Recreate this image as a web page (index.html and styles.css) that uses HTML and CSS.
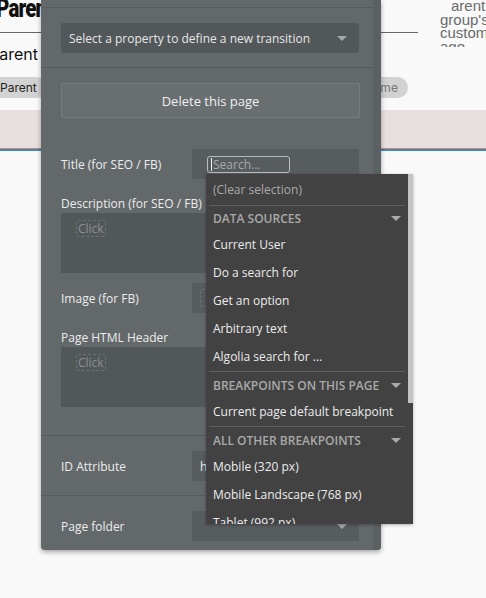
FILE: index.html
```html
<!DOCTYPE html>
<html>
<head>
<meta charset="utf-8">
<link rel="stylesheet" href="styles.css">
</head>
<body>
<div class="canvas">
  <div class="cv-heading">Parent</div>
  <div class="cv-rule"></div>
  <div class="cv-sub">Parent</div>
  <div class="cv-pill cv-pill-left">Parent</div>
  <div class="cv-pill cv-pill-right">Rename</div>
  <div class="cv-note">
    <div class="cv-note-line cv-indent">arent</div>
    <div class="cv-note-line">group's</div>
    <div class="cv-note-line">custom</div>
    <div class="cv-note-line">ago</div>
  </div>
  <div class="cv-band"></div>
</div>

<div class="panel">
  <div class="panel-body">
    <div class="sec-top"></div>
    <div class="sec">
      <div class="select">
        <span>Select a property to define a new transition</span>
        <span class="caret"></span>
      </div>
    </div>
    <div class="sec sec-main">
      <div class="btn">Delete this page</div>
      <div class="row row-title">
        <div class="label">Title (for SEO / FB)</div>
        <div class="field">
          <div class="search"><span class="cursor"></span><span class="ph">Search...</span></div>
        </div>
      </div>
      <div class="label label-block">Description (for SEO / FB)</div>
      <div class="box"><span class="click">Click</span></div>
      <div class="row row-image">
        <div class="label">Image (for FB)</div>
        <div class="field"><span class="click click-small"></span></div>
      </div>
      <div class="label label-block">Page HTML Header</div>
      <div class="box"><span class="click">Click</span></div>
    </div>
    <div class="sec">
      <div class="row">
        <div class="label">ID Attribute</div>
        <div class="field field-text">h</div>
      </div>
    </div>
    <div class="sec sec-last">
      <div class="row">
        <div class="label">Page folder</div>
        <div class="field field-select"><span class="caret"></span></div>
      </div>
    </div>
  </div>
  <div class="panel-track"></div>
</div>

<div class="dropdown">
  <div class="dd-list">
    <div class="dd-item dd-muted dd-first">(Clear selection)</div>
    <div class="dd-head dd-head-first">DATA SOURCES<span class="caret caret-head"></span></div>
    <div class="dd-item">Current User</div>
    <div class="dd-item">Do a search for</div>
    <div class="dd-item">Get an option</div>
    <div class="dd-item">Arbitrary text</div>
    <div class="dd-item">Algolia search for ...</div>
    <div class="dd-head">BREAKPOINTS ON THIS PAGE<span class="caret caret-head"></span></div>
    <div class="dd-item">Current page default breakpoint</div>
    <div class="dd-head">ALL OTHER BREAKPOINTS<span class="caret caret-head"></span></div>
    <div class="dd-item">Mobile (320 px)</div>
    <div class="dd-item">Mobile Landscape (768 px)</div>
    <div class="dd-item">Tablet (992 px)</div>
  </div>
  <div class="dd-scroll"></div>
</div>
</body>
</html>
```
FILE: styles.css
```css
html, body {
  margin: 0;
  padding: 0;
}
body {
  width: 486px;
  height: 598px;
  overflow: hidden;
  position: relative;
  background: #f9f9f9;
  font-family: "Open Sans", "DejaVu Sans", sans-serif;
}

/* ---------- editor canvas behind the panel ---------- */
.canvas {
  position: absolute;
  inset: 0;
}
.cv-heading {
  position: absolute;
  left: -4px;
  top: -6px;
  font-family: "Roboto", "Liberation Sans", sans-serif;
  font-weight: 900;
  font-size: 25px;
  color: #111;
  letter-spacing: -1px;
  transform: scaleX(0.82);
  transform-origin: left top;
}
.cv-rule {
  position: absolute;
  left: 0;
  top: 32px;
  width: 418px;
  height: 1px;
  background: #666;
}
.cv-sub {
  position: absolute;
  left: -11px;
  top: 44px;
  font-family: "Inter", "Liberation Sans", sans-serif;
  font-size: 16px;
  color: #111;
}
.cv-pill {
  position: absolute;
  top: 77px;
  height: 21px;
  line-height: 21px;
  border-radius: 11px;
  background: #d2d2d2;
  font-family: "Inter", "Liberation Sans", sans-serif;
  font-size: 12px;
}
.cv-pill-left {
  left: -20px;
  padding: 0 10px 0 20px;
  color: #222;
}
.cv-pill-right {
  left: 342px;
  padding: 0 10px;
  color: #777;
}
.cv-note {
  position: absolute;
  left: 440px;
  top: -1px;
  width: 60px;
  height: 48px;
  overflow: hidden;
  font-family: "Liberation Sans", sans-serif;
  font-size: 15px;
  line-height: 13.5px;
  color: #6a6a6a;
}
.cv-note-line {
  white-space: nowrap;
}
.cv-indent {
  padding-left: 11px;
}
.cv-band {
  position: absolute;
  left: 0;
  top: 110px;
  width: 486px;
  height: 38px;
  background: #e8e0df;
  border-bottom: 1px solid #e0873a;
  box-shadow: 0 2px 0 #3a86dc;
}

/* ---------- property panel ---------- */
.panel {
  position: absolute;
  left: 41px;
  top: 0;
  width: 340px;
  background: #63686b;
  border-radius: 0 0 4px 4px;
  box-shadow: 0 2px 5px rgba(0, 0, 0, 0.35);
  display: flex;
  color: #ececec;
  font-size: 12px;
}
.panel-body {
  flex: 1;
  display: flex;
  flex-direction: column;
  min-width: 0;
}
.panel-body > * {
  flex-shrink: 0;
}
.panel-track {
  width: 8px;
  background: #5b6063;
  border-bottom-right-radius: 4px;
}
.sec-top {
  height: 7px;
  border-bottom: 1px solid #565b5e;
}
.sec {
  padding: 15px 14px 14px 20px;
  border-bottom: 1px solid #565b5e;
  display: flex;
  flex-direction: column;
}
.sec-main {
  padding-bottom: 28px;
}
.sec-last {
  border-bottom: none;
  padding-bottom: 9px;
}
.select {
  height: 30px;
  background: #52575a;
  border-radius: 2px;
  display: flex;
  align-items: center;
  justify-content: space-between;
  padding: 0 12px 0 8px;
  color: #e6e6e6;
}
.caret {
  width: 0;
  height: 0;
  border-left: 5px solid transparent;
  border-right: 5px solid transparent;
  border-top: 5px solid #a4a8aa;
}
.btn {
  height: 35px;
  box-sizing: border-box;
  background: #696e71;
  border: 1px solid #767b7e;
  border-radius: 2px;
  display: flex;
  align-items: center;
  justify-content: center;
  margin-right: -1px;
  color: #efefef;
  font-size: 13px;
}
.row {
  display: grid;
  grid-template-columns: 131px 1fr;
  align-items: center;
}
.row-title {
  margin-top: 31px;
}
.row-image {
  margin-top: 10px;
}
.label {
  color: #ececec;
  white-space: nowrap;
}
.label-block {
  padding-top: 15px;
  line-height: 19px;
}
.field {
  height: 30px;
  background: #575c5f;
  display: flex;
  align-items: center;
  padding-left: 15px;
}
.field-text {
  padding-left: 8px;
  color: #ececec;
}
.field-select {
  justify-content: flex-end;
  padding-right: 12px;
}
.search {
  width: 83px;
  height: 17px;
  box-sizing: border-box;
  border: 1px solid #b9bcbe;
  border-radius: 3px;
  display: flex;
  align-items: center;
  padding-left: 3px;
  color: #a6a9ab;
}
.cursor {
  width: 1px;
  height: 13px;
  background: #f2f2f2;
  margin-right: 1px;
}
.box {
  height: 60px;
  background: #52575a;
  padding: 7px 0 0 15px;
  box-sizing: border-box;
}
.click {
  display: inline-block;
  border: 1px dashed #6c7174;
  border-radius: 2px;
  padding: 0 1px;
  line-height: 15px;
  color: #8b8f92;
}
.click-small {
  width: 10px;
  height: 16px;
  margin-left: -7px;
}

/* ---------- dynamic data dropdown ---------- */
.dropdown {
  position: absolute;
  left: 206px;
  top: 174px;
  width: 207px;
  height: 350px;
  background: #424242;
  overflow: hidden;
  box-shadow: 0 1px 3px rgba(0, 0, 0, 0.3);
}
.dd-list {
  padding: 2px 8px 0 3px;
  display: flex;
  flex-direction: column;
  font-size: 12px;
}
.dd-item {
  height: 28px;
  line-height: 28px;
  padding-left: 4px;
  color: #ececec;
  white-space: nowrap;
}
.dd-muted {
  color: #a9a9a9;
}
.dd-first {
  height: 29px;
}
.dd-head {
  height: 26px;
  border-top: 1px solid #5f5f5f;
  padding-left: 4px;
  display: flex;
  align-items: center;
  justify-content: space-between;
  padding-right: 4px;
  color: #a9a9a9;
  font-weight: 600;
  white-space: nowrap;
}
.dd-head-first {
  height: 25px;
}
.caret-head {
  border-top-color: #a9a9a9;
}
.dd-scroll {
  position: absolute;
  right: 0;
  top: 0;
  width: 5px;
  height: 229px;
  background: #c3c3c3;
}
```
